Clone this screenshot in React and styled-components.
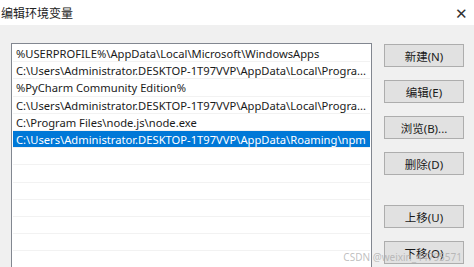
import React from 'react';
import styled, { createGlobalStyle } from 'styled-components';

const GlobalStyle = createGlobalStyle`
  html, body {
    margin: 0;
    padding: 0;
    background: #f0f0f0;
    overflow: hidden;
  }
  body {
    font-family: "Noto Sans", "Noto Sans CJK SC", sans-serif;
  }
`;

const Window = styled.div`
  width: 474px;
  height: 267px;
  position: relative;
  overflow: hidden;
  background: #f0f0f0;
`;

const TitleBar = styled.div`
  height: 25px;
  background: #ffffff;
  display: flex;
  align-items: center;
  justify-content: space-between;
  padding: 0 6px 0 1px;
  box-sizing: border-box;
`;

const Title = styled.span`
  font-family: "Noto Sans CJK SC", sans-serif;
  font-size: 12px;
  color: #222;
`;

const Close = styled.span`
  font-family: "Noto Sans CJK SC", sans-serif;
  font-size: 15px;
  font-weight: 300;
  color: #333;
`;

const Body = styled.div`
  display: flex;
  align-items: flex-start;
  gap: 12px;
  padding: 18px 0 0 11px;
`;

const ListBox = styled.div`
  width: 361px;
  height: 240px;
  box-sizing: border-box;
  background: #ffffff;
  border: 1px solid #828790;
  border-bottom: none;
  padding: 1px 1px 0 1px;
`;

const Row = styled.div`
  height: 17.2px;
  line-height: 17px;
  box-sizing: border-box;
  padding-left: 3px;
  font-family: "Noto Sans", "Noto Sans CJK SC", sans-serif;
  font-size: 11.2px;
  white-space: nowrap;
  overflow: hidden;
  border-bottom: 1px solid #f2f2f2;
  color: ${(p) => (p.$selected ? '#ffffff' : '#1a1a1a')};
  background: ${(p) => (p.$selected ? '#0078d7' : '#ffffff')};
`;

const Buttons = styled.div`
  display: flex;
  flex-direction: column;
  padding-top: 1px;
`;

const Button = styled.div`
  width: 80px;
  height: 23px;
  box-sizing: border-box;
  margin-bottom: ${(p) => (p.$gap ? 30 : 13)}px;
  background: #e1e1e1;
  border: 1px solid #adadad;
  display: flex;
  align-items: center;
  justify-content: center;
  font-family: "Noto Sans", "Noto Sans CJK SC", sans-serif;
  font-size: 11.5px;
  color: #1a1a1a;
`;

const Watermark = styled.div`
  position: absolute;
  right: 12px;
  bottom: 3px;
  font-family: "Noto Sans", sans-serif;
  font-size: 10px;
  color: rgba(170, 170, 170, 0.75);
`;

const rows = [
  '%USERPROFILE%\\AppData\\Local\\Microsoft\\WindowsApps',
  'C:\\Users\\Administrator.DESKTOP-1T97VVP\\AppData\\Local\\Progra...',
  '%PyCharm Community Edition%',
  'C:\\Users\\Administrator.DESKTOP-1T97VVP\\AppData\\Local\\Progra...',
  'C:\\Program Files\\node.js\\node.exe',
  'C:\\Users\\Administrator.DESKTOP-1T97VVP\\AppData\\Roaming\\npm',
  '', '', '', '', '', '', '',
];

const buttons = [
  { label: '新建(N)' },
  { label: '编辑(E)' },
  { label: '浏览(B)...' },
  { label: '删除(D)', gap: true },
  { label: '上移(U)' },
  { label: '下移(O)' },
];

export default function App() {
  return (
    <Window>
      <GlobalStyle />
      <TitleBar>
        <Title>编辑环境变量</Title>
        <Close>✕</Close>
      </TitleBar>
      <Body>
        <ListBox>
          {rows.map((text, i) => (
            <Row key={i} $selected={i === 5}>
              {text}
            </Row>
          ))}
        </ListBox>
        <Buttons>
          {buttons.map((b) => (
            <Button key={b.label} $gap={b.gap}>
              {b.label}
            </Button>
          ))}
        </Buttons>
      </Body>
      <Watermark>CSDN @weixin_44795571</Watermark>
    </Window>
  );
}
